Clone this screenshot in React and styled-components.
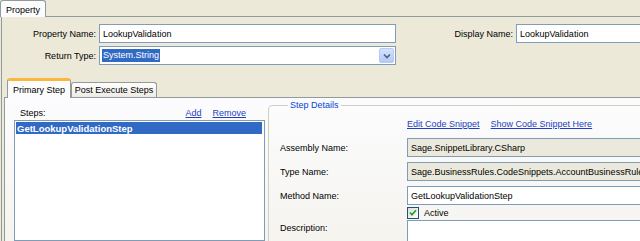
import React from 'react';
import styled, { createGlobalStyle } from 'styled-components';

const GlobalStyle = createGlobalStyle`
  html, body {
    margin: 0;
    padding: 0;
    background: #ece9d8;
  }
  body {
    font-family: "Liberation Sans", Arial, sans-serif;
    font-size: 9px;
    color: #000;
  }
  * {
    box-sizing: border-box;
  }
`;

const Window = styled.div`
  width: 640px;
  height: 241px;
  overflow: hidden;
  display: flex;
  flex-direction: column;
  background: #ece9d8;
`;

const TabStrip = styled.div`
  display: flex;
  align-items: flex-end;
  height: ${props => props.height}px;
  margin-top: ${props => props.top || 0}px;
  padding-left: ${props => props.inset || 0}px;
  position: relative;
  z-index: 1;
  flex-shrink: 0;
`;

const Tab = styled.div`
  width: ${props => props.width}px;
  height: ${props => props.height}px;
  margin-bottom: ${props => (props.active ? -1 : 0)}px;
  display: flex;
  align-items: center;
  justify-content: center;
  padding-top: ${props => (props.active ? 1 : 0)}px;
  border: 1px solid #919b9c;
  border-bottom: none;
  border-top: ${props => (props.accent ? '3px solid #f9b83c' : '1px solid #919b9c')};
  border-radius: 3px 3px 0 0;
  background: ${props => (props.active ? '#fcfcfe' : 'linear-gradient(#ffffff, #ecebe5)')};
  white-space: nowrap;
`;

const Page = styled.div`
  flex: 1;
  display: flex;
  flex-direction: column;
  margin-left: ${props => props.inset}px;
  border-left: 1px solid #919b9c;
  border-top: 1px solid #919b9c;
  background: ${props => props.bg};
  min-height: 0;
`;

const FieldGrid = styled.div`
  display: grid;
  grid-template-columns: 97px 297px 120px 200px;
  grid-auto-rows: 19px;
  row-gap: 3px;
  margin-top: 7px;
`;

const Label = styled.div`
  display: flex;
  align-items: center;
  justify-content: ${props => (props.right ? 'flex-end' : 'flex-start')};
  padding-right: ${props => (props.right ? 3 : 0)}px;
  white-space: nowrap;
`;

const TextBox = styled.div`
  height: ${props => props.height || 19}px;
  width: ${props => props.width || 'auto'};
  border: 1px solid #7f9db9;
  background: ${props => (props.disabled ? '#ebe9dc' : '#ffffff')};
  display: flex;
  align-items: ${props => (props.multiline ? 'flex-start' : 'center')};
  padding-left: 3px;
  white-space: nowrap;
  overflow: hidden;
`;

const Combo = styled.div`
  height: 19px;
  border: 1px solid #7f9db9;
  background: #fff;
  display: flex;
  align-items: center;
  padding: 1px 1px 1px 2px;
`;

const Selection = styled.span`
  background: #316ac5;
  color: #fff;
  padding: 1px 1px;
  line-height: 11px;
`;

const DropButton = styled.div`
  margin-left: auto;
  width: 15px;
  height: 15px;
  border: 1px solid #b7c9f4;
  border-radius: 2px;
  background: linear-gradient(#d5e2fe, #b4c9f6);
  display: flex;
  align-items: center;
  justify-content: center;
`;

const Body = styled.div`
  flex: 1;
  display: flex;
  align-items: flex-start;
  padding-left: 9px;
  min-height: 0;
  overflow: hidden;
`;

const StepsColumn = styled.div`
  width: 251px;
  align-self: stretch;
  display: flex;
  flex-direction: column;
  padding-top: 8px;
`;

const StepsHeader = styled.div`
  height: 14px;
  display: flex;
  align-items: center;
  padding: 0 19px 0 6px;
  gap: 11px;
`;

const Spacer = styled.div`
  flex: 1;
`;

const Link = styled.span`
  color: #1f3fbf;
  text-decoration: underline;
  white-space: nowrap;
`;

const ListBox = styled.div`
  flex: 1;
  border: 1px solid #7f9db9;
  background: #fff;
  padding: 1px 2px 1px 1px;
`;

const ListItem = styled.div`
  height: 12px;
  display: flex;
  align-items: center;
  padding-left: 1px;
  font-size: 9.5px;
  font-weight: ${props => (props.selected ? 'bold' : 'normal')};
  background: ${props => (props.selected ? '#316ac5' : 'transparent')};
  color: ${props => (props.selected ? '#fff' : '#000')};
`;

const GroupBox = styled.fieldset`
  flex: 1;
  margin: 1px -12px 0 3px;
  padding: 0 0 12px 11px;
  border: 1px solid #d0d0bf;
  border-radius: 4px;
  min-width: 0;
`;

const Legend = styled.legend`
  color: #0046d5;
  margin-left: 8px;
  padding: 0 2px;
  line-height: 12px;
`;

const FormRow = styled.div`
  display: flex;
  align-items: center;
  height: ${props => props.height || 19}px;
  margin-top: ${props => props.top}px;
`;

const FormLabel = styled.div`
  width: 127px;
  flex-shrink: 0;
  align-self: ${props => (props.topAlign ? 'flex-start' : 'center')};
  padding-top: ${props => (props.topAlign ? 3 : 0)}px;
`;

const LinkGroup = styled.div`
  display: flex;
  gap: 11px;
`;

const CheckBox = styled.div`
  width: 12px;
  height: 12px;
  border: 1px solid #1c5180;
  background: linear-gradient(135deg, #dcdcd7, #ffffff);
  display: flex;
  align-items: center;
  justify-content: center;
  margin-right: 5px;
`;

const Chevron = () => (
  <svg width="8" height="6" viewBox="0 0 8 6">
    <path d="M1 1.5 L4 4.5 L7 1.5" fill="none" stroke="#4d6185" strokeWidth="1.6" />
  </svg>
);

const Check = () => (
  <svg width="8" height="8" viewBox="0 0 8 8">
    <path d="M1 3.5 L3 5.8 L7 1.3" fill="none" stroke="#21a121" strokeWidth="1.7" />
  </svg>
);

export default function App() {
  return (
    <>
      <GlobalStyle />
      <Window>
        <TabStrip height={16}>
          <Tab active width={46} height={17}>Property</Tab>
        </TabStrip>
        <Page inset={1} bg="#ece9d8">
          <FieldGrid>
            <Label right>Property Name:</Label>
            <TextBox>LookupValidation</TextBox>
            <Label right>Display Name:</Label>
            <TextBox>LookupValidation</TextBox>
            <Label right>Return Type:</Label>
            <Combo>
              <Selection>System.String</Selection>
              <DropButton>
                <Chevron />
              </DropButton>
            </Combo>
          </FieldGrid>
          <TabStrip height={19} top={13} inset={5}>
            <Tab active accent width={64} height={20}>Primary Step</Tab>
            <Tab width={86} height={15}>Post Execute Steps</Tab>
          </TabStrip>
          <Page inset={2} bg="linear-gradient(#fcfcfe, #f5f4ef)">
            <Body>
              <StepsColumn>
                <StepsHeader>
                  <span>Steps:</span>
                  <Spacer />
                  <Link>Add</Link>
                  <Link>Remove</Link>
                </StepsHeader>
                <ListBox>
                  <ListItem selected>GetLookupValidationStep</ListItem>
                </ListBox>
              </StepsColumn>
              <GroupBox>
                <Legend>Step Details</Legend>
                <FormRow height={12} top={7}>
                  <FormLabel />
                  <LinkGroup>
                    <Link>Edit Code Snippet</Link>
                    <Link>Show Code Snippet Here</Link>
                  </LinkGroup>
                </FormRow>
                <FormRow top={8}>
                  <FormLabel>Assembly Name:</FormLabel>
                  <TextBox disabled width="260px">Sage.SnippetLibrary.CSharp</TextBox>
                </FormRow>
                <FormRow top={5}>
                  <FormLabel>Type Name:</FormLabel>
                  <TextBox disabled width="260px">
                    Sage.BusinessRules.CodeSnippets.AccountBusinessRules
                  </TextBox>
                </FormRow>
                <FormRow top={5}>
                  <FormLabel>Method Name:</FormLabel>
                  <TextBox width="260px">GetLookupValidationStep</TextBox>
                </FormRow>
                <FormRow height={12} top={2}>
                  <FormLabel />
                  <CheckBox>
                    <Check />
                  </CheckBox>
                  <span>Active</span>
                </FormRow>
                <FormRow height={40} top={1}>
                  <FormLabel topAlign>Description:</FormLabel>
                  <TextBox width="260px" height={40} multiline />
                </FormRow>
              </GroupBox>
            </Body>
          </Page>
        </Page>
      </Window>
    </>
  );
}
